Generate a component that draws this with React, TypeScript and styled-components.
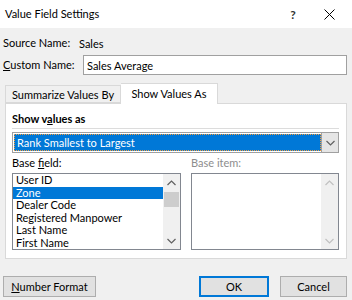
import React from 'react';
import styled, { createGlobalStyle } from 'styled-components';

const GlobalStyle = createGlobalStyle`
  html, body {
    margin: 0;
    padding: 0;
    background: #f0f0f0;
  }
  * {
    box-sizing: border-box;
  }
`;

const Window = styled.div`
  width: 352px;
  height: 300px;
  background: #f0f0f0;
  font-family: Lato, 'Noto Sans', sans-serif;
  font-size: 11px;
  color: #000;
  white-space: nowrap;
  overflow: hidden;
  display: flex;
  flex-direction: column;
`;

const TitleBar = styled.div`
  height: 28px;
  background: #fff;
  display: flex;
  align-items: center;
  padding-left: 5px;
`;

const Title = styled.div`
  flex: 1;
  line-height: 14px;
`;

const TitleButton = styled.div<{ $w: number }>`
  width: ${p => p.$w}px;
  height: 28px;
  display: flex;
  align-items: center;
  justify-content: center;
  font-size: 12px;
  font-weight: bold;
  color: #333;
`;

const Body = styled.div`
  padding: 0 5px 0 3px;
  display: flex;
  flex-direction: column;
`;

const Row = styled.div<{ $mt: number; $h: number }>`
  margin-top: ${p => p.$mt}px;
  height: ${p => p.$h}px;
  display: flex;
  align-items: center;
`;

const Label = styled.div<{ $w: number }>`
  width: ${p => p.$w}px;
  flex-shrink: 0;
  line-height: 14px;
`;

const TextInput = styled.div`
  flex: 1;
  height: 20px;
  background: #fff;
  border: 1px solid #a0a0a0;
  display: flex;
  align-items: center;
  padding-left: 3px;
`;

const TabControl = styled.div`
  margin: 8px 0 0 2px;
  width: 342px;
  display: flex;
  flex-direction: column;
`;

const TabStrip = styled.div`
  height: 20px;
  display: flex;
  align-items: flex-end;
  position: relative;
  z-index: 1;
`;

const Tab = styled.div<{ $active?: boolean; $w: number }>`
  width: ${p => p.$w}px;
  height: ${p => (p.$active ? 21 : 18)}px;
  margin-bottom: ${p => (p.$active ? -1 : 0)}px;
  background: ${p => (p.$active ? '#fff' : '#f0f0f0')};
  border: 1px solid #d9d9d9;
  border-bottom: ${p => (p.$active ? 'none' : '1px solid #d9d9d9')};
  border-left: ${p => (p.$active ? 'none' : '1px solid #d9d9d9')};
  display: flex;
  align-items: center;
  justify-content: center;
  padding-bottom: ${p => (p.$active ? 2 : 0)}px;
`;

const Panel = styled.div`
  height: 156px;
  background: #fff;
  border: 1px solid #d9d9d9;
  padding: 0 6px 0 6px;
  display: flex;
  flex-direction: column;
`;

const Heading = styled.div`
  margin-top: 8px;
  height: 14px;
  line-height: 14px;
  font-weight: bold;
`;

const Separator = styled.div`
  margin-top: 2px;
  width: 327px;
  height: 1px;
  background: #dcdcdc;
`;

const Select = styled.div`
  margin-top: 3px;
  width: 327px;
  height: 21px;
  border: 1px solid #a0a0a0;
  background: #fff;
  display: flex;
  padding: 1px 0 1px 1px;
`;

const SelectValue = styled.div`
  flex: 1;
  background: #0078d7;
  color: #fff;
  border: 1px dotted #f59c3c;
  display: flex;
  align-items: center;
  padding-left: 2px;
`;

const DropButton = styled.div`
  width: 17px;
  margin: -2px 0 -2px 0;
  background: #e5e5e5;
  border: 1px solid #a0a0a0;
  border-right: none;
  display: flex;
  align-items: center;
  justify-content: center;
`;

const Labels = styled.div`
  margin-top: 3px;
  height: 14px;
  display: grid;
  grid-template-columns: 169px 148px;
  column-gap: 10px;
  line-height: 14px;
`;

const FieldLabel = styled.div<{ $disabled?: boolean }>`
  color: ${p => (p.$disabled ? '#8d8d8d' : '#000')};
`;

const Lists = styled.div`
  margin-top: 3px;
  display: grid;
  grid-template-columns: 169px 148px;
  column-gap: 10px;
`;

const ListBox = styled.div`
  height: 77px;
  border: 1px solid #828790;
  background: #fff;
  display: flex;
`;

const Items = styled.div`
  flex: 1;
  display: flex;
  flex-direction: column;
  overflow: hidden;
`;

const Item = styled.div<{ $selected?: boolean }>`
  flex: 0 0 12.5px;
  height: 12.5px;
  line-height: 12.5px;
  padding-left: 3px;
  background: ${p => (p.$selected ? '#0078d7' : 'transparent')};
  color: ${p => (p.$selected ? '#fff' : '#000')};
`;

const ScrollBar = styled.div`
  width: 17px;
  background: #f0f0f0;
  display: flex;
  flex-direction: column;
  align-items: center;
`;

const ScrollArrow = styled.div`
  height: 17px;
  width: 17px;
  display: flex;
  align-items: center;
  justify-content: center;
`;

const ScrollTrack = styled.div`
  flex: 1;
  width: 17px;
  padding: 0 1px;
`;

const Thumb = styled.div<{ $top: number }>`
  margin-top: ${p => p.$top}px;
  height: 15px;
  background: #cdcdcd;
`;

const Footer = styled.div`
  margin-top: 17px;
  height: 21px;
  display: flex;
  align-items: stretch;
`;

const Button = styled.div<{ $w: number; $default?: boolean; $ml?: number }>`
  width: ${p => p.$w}px;
  margin-left: ${p => p.$ml ?? 0}px;
  background: #e1e1e1;
  border: ${p => (p.$default ? '2px solid #0078d7' : '1px solid #adadad')};
  display: flex;
  align-items: center;
  justify-content: center;
`;

const Spacer = styled.div`
  flex: 1;
`;

const U = styled.span`
  text-decoration: underline;
`;

function Chevron({ up, color = '#606060' }: { up?: boolean; color?: string }) {
  return (
    <svg width="9" height="6" viewBox="0 0 9 6">
      <polyline
        points={up ? '0.5,5 4.5,1 8.5,5' : '0.5,1 4.5,5 8.5,1'}
        fill="none"
        stroke={color}
        strokeWidth="1.2"
      />
    </svg>
  );
}

const fields = ['User ID', 'Zone', 'Dealer Code', 'Registered Manpower', 'Last Name', 'First Name'];

export default function App() {
  return (
    <Window>
      <GlobalStyle />
      <TitleBar>
        <Title>Value Field Settings</Title>
        <TitleButton $w={26}>?</TitleButton>
        <TitleButton $w={46}>
          <svg width="11" height="11" viewBox="0 0 11 11">
            <path d="M0.5 0.5 L10.5 10.5 M10.5 0.5 L0.5 10.5" stroke="#000" strokeWidth="1" />
          </svg>
        </TitleButton>
      </TitleBar>
      <Body>
        <Row $mt={8} $h={14}>
          <Label $w={76}>Source Name:</Label>
          <span>Sales</span>
        </Row>
        <Row $mt={5} $h={20}>
          <Label $w={80}>
            <U>C</U>ustom Name:
          </Label>
          <TextInput>Sales Average</TextInput>
        </Row>
        <TabControl>
          <TabStrip>
            <Tab $w={116}>Summarize Values By</Tab>
            <Tab $w={97} $active>
              Show Values As
            </Tab>
          </TabStrip>
          <Panel>
            <Heading>
              Show v<U>a</U>lues as
            </Heading>
            <Separator />
            <Select>
              <SelectValue>Rank Smallest to Largest</SelectValue>
              <DropButton>
                <Chevron />
              </DropButton>
            </Select>
            <Labels>
              <FieldLabel>
                Base <U>f</U>ield:
              </FieldLabel>
              <FieldLabel $disabled>Base item:</FieldLabel>
            </Labels>
            <Lists>
              <ListBox>
                <Items>
                  {fields.map(f => (
                    <Item key={f} $selected={f === 'Zone'}>
                      {f}
                    </Item>
                  ))}
                </Items>
                <ScrollBar>
                  <ScrollArrow>
                    <Chevron up />
                  </ScrollArrow>
                  <ScrollTrack>
                    <Thumb $top={1} />
                  </ScrollTrack>
                  <ScrollArrow>
                    <Chevron />
                  </ScrollArrow>
                </ScrollBar>
              </ListBox>
              <ListBox>
                <Items />
                <ScrollBar>
                  <ScrollArrow>
                    <Chevron up color="#c0c0c0" />
                  </ScrollArrow>
                  <ScrollTrack />
                  <ScrollArrow>
                    <Chevron color="#c0c0c0" />
                  </ScrollArrow>
                </ScrollBar>
              </ListBox>
            </Lists>
          </Panel>
        </TabControl>
        <Footer>
          <Button $w={93}>
            <span>
              <U>N</U>umber Format
            </span>
          </Button>
          <Spacer />
          <Button $w={70} $default>
            OK
          </Button>
          <Button $w={67} $ml={11}>
            Cancel
          </Button>
        </Footer>
      </Body>
    </Window>
  );
}
